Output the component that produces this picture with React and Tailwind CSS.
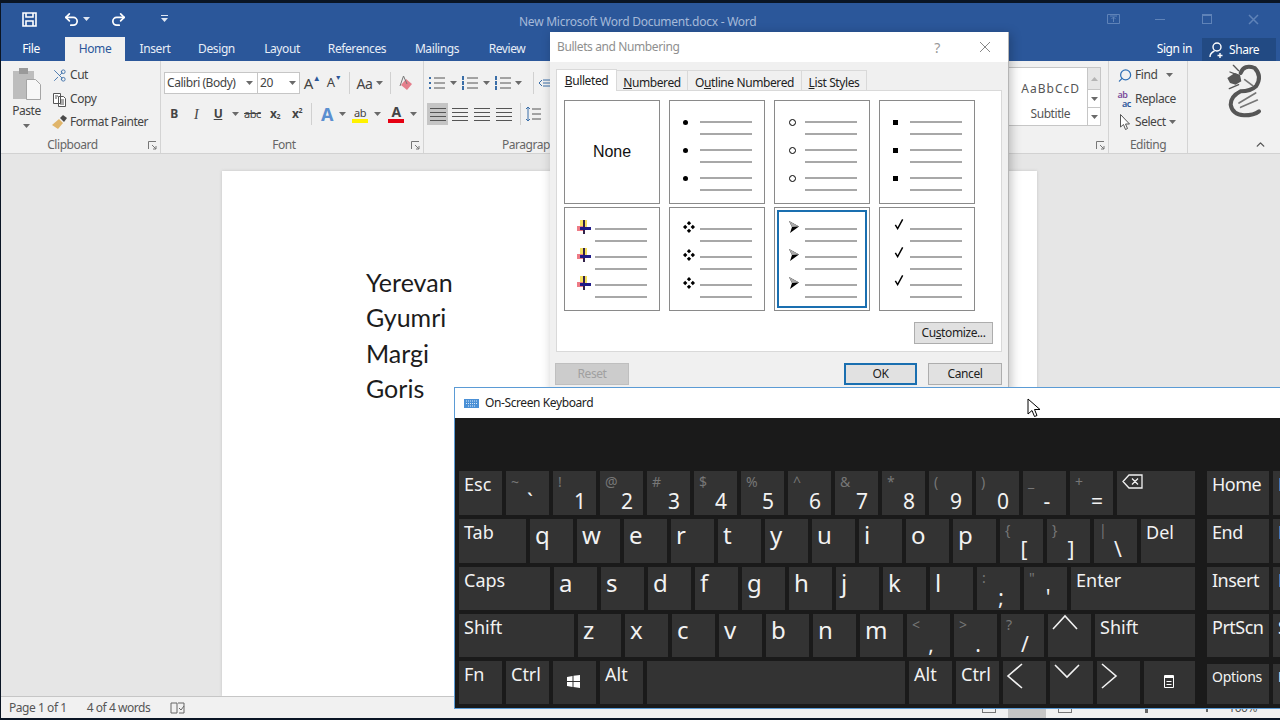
import React from 'react';
import { Scissors, Undo2, Redo2, ChevronUp, Search } from 'lucide-react';

const Caret = ({ className = '' }) => (
  <svg width="7" height="4" viewBox="0 0 7 4" className={className}>
    <path d="M0 0h7L3.5 4z" fill="#6a6a6a" />
  </svg>
);

const Launcher = () => (
  <svg width="9" height="9" viewBox="0 0 9 9" fill="none" stroke="#777" className="absolute right-[3px] top-[4px]">
    <path d="M.5 8V.5H8M4 4l4 4M5 8h3V5" />
  </svg>
);

const Sep = ({ className = '' }) => <div className={'w-px h-[22px] bg-[#d0d0d0] ' + className} />;

const Lines = ({ className = '' }) => (
  <svg width="16" height="16" viewBox="0 0 16 16" stroke="#555" className={className}>
    <path d="M0 2.5h16M0 6.5h16M0 10.5h16M0 14.5h16" />
  </svg>
);

const Btn = ({ w = 'w-[22px]', className = '', children }) => (
  <div className={'h-[22px] flex items-center justify-center shrink-0 ' + w + ' ' + className}>{children}</div>
);

function Group({ w, label, launcher = true, children }) {
  return (
    <div className={'relative h-full flex flex-col border-r border-[#d4d4d4] shrink-0 ' + w}>
      <div className="h-[76px]">{children}</div>
      <div className={'relative h-[15px] text-center text-[12px] leading-[15px] text-[#666] ' + (launcher ? 'pr-[16px]' : '')}>
        {label}
        {launcher && <Launcher />}
      </div>
    </div>
  );
}

function ClipboardGroup() {
  return (
    <Group w="w-[160px]" label="Clipboard">
      <div className="flex">
        <div className="w-[45px] ml-[3px] flex flex-col items-center pt-[6px]">
          <svg width="30" height="33" viewBox="0 0 30 33">
            <rect x="1" y="4" width="21" height="28" fill="#bdbdbd" />
            <rect x="7" y="1" width="9" height="6" fill="#9a9a9a" />
            <path d="M14.5 12.5h9l5 5v15h-14z" fill="#f7f7f7" stroke="#a5a5a5" />
          </svg>
          <div className="text-[12px] leading-[16px] text-[#444] mt-[3px]">Paste</div>
          <Caret className="mt-[5px]" />
        </div>
        <div className="flex flex-col pt-[2px] text-[12px] text-[#444]">
          <div className="h-[24px] flex items-center">
            <Scissors size={15} strokeWidth={1.4} className="w-[21px] text-[#3a6ea8] -scale-x-100" />
            <span>Cut</span>
          </div>
          <div className="h-[24px] flex items-center">
            <div className="w-[21px] flex justify-center">
              <svg width="15" height="15" viewBox="0 0 15 15" fill="#fff" stroke="#555">
                <path d="M1.5 1.5h7v10h-7zM6.5 4.5h5l2 2v8h-7z" />
                <path d="M8 8h4M8 10h4M8 12h4M3 4h3M3 6h2" fill="none" />
              </svg>
            </div>
            <span>Copy</span>
          </div>
          <div className="h-[22px] flex items-center">
            <div className="w-[21px] flex justify-center">
              <svg width="15" height="14" viewBox="0 0 15 14">
                <path d="M0 10l7-6 4 4-5 6z" fill="#e0b56a" />
                <path d="M8 3l3-3 4 3-3 4z" fill="#4a4a4a" />
              </svg>
            </div>
            <span>Format Painter</span>
          </div>
        </div>
      </div>
    </Group>
  );
}

function FontGroup() {
  return (
    <Group w="w-[263px]" label="Font">
      <div className="flex items-center pt-[11px] pl-[3px] text-[#444]">
        <div className="w-[94px] h-[22px] bg-white border border-[#c6c6c6] flex items-center justify-between pl-[2px] pr-[4px] text-[12px]">
          Calibri (Body)
          <Caret />
        </div>
        <div className="w-[43px] h-[22px] -ml-px bg-white border border-[#c6c6c6] flex items-center justify-between pl-[2px] pr-[3px] text-[12px]">
          20
          <Caret />
        </div>
        <Btn className="ml-px text-[15px]">A<span className="text-[8px] text-[#2b579a] -mt-[10px]">▲</span></Btn>
        <Btn className="text-[13px]">A<span className="text-[7px] text-[#2b579a] -mt-[10px]">▼</span></Btn>
        <Sep className="ml-[4px]" />
        <Btn w="w-[40px]" className="text-[14px] gap-[4px]">Aa<Caret /></Btn>
        <Sep />
        <Btn className="ml-[3px]">
          <svg width="15" height="16" viewBox="0 0 15 16">
            <path d="M8 4l6 5-5 6-6-5z" fill="#e57f8c" />
            <path d="M2 11L5.5 1 9 9" stroke="#777" fill="none" />
          </svg>
        </Btn>
      </div>
      <div className="flex items-center mt-[9px] pl-[2px] text-[12px] text-[#444]">
        <Btn className="font-bold">B</Btn>
        <Btn className="italic font-['Liberation_Serif',serif] text-[14px]">I</Btn>
        <Btn className="font-bold underline">U</Btn>
        <Btn w="w-[12px]"><Caret /></Btn>
        <Btn w="w-[23px]" className="line-through text-[11px]">abc</Btn>
        <Btn className="font-bold">x<span className="text-[7px] mt-[6px]">2</span></Btn>
        <Btn className="font-bold">x<span className="text-[7px] -mt-[6px]">2</span></Btn>
        <Sep className="ml-[3px] mr-[5px]" />
        <Btn w="w-[20px]"><span className="text-[18px] text-[#5b8fd0] font-bold">A</span></Btn>
        <Btn w="w-[10px]"><Caret /></Btn>
        <div className="w-[20px] ml-[3px] flex flex-col items-center text-[11px] leading-[13px]">
          ab
          <div className="w-[16px] h-[4px] bg-[#fff200]" />
        </div>
        <Btn w="w-[12px]" className="ml-px"><Caret /></Btn>
        <div className="w-[20px] ml-[3px] flex flex-col items-center text-[14px] leading-[14px] font-bold">
          A
          <div className="w-[16px] h-[4px] bg-[#e60012]" />
        </div>
        <Btn w="w-[12px]" className="ml-px"><Caret /></Btn>
      </div>
    </Group>
  );
}

const BulletIcon = ({ num }) => (
  <svg width="18" height="18" viewBox="0 0 18 18" stroke="#555" fill="#3a6ea8">
    <path d="M6 4h11M6 9h11M6 14h11" fill="none" />
    {num ? <path d="M1 2h2v4H1zM1 7h2v4H1zM1 12h2v4H1z" stroke="none" /> : <path d="M1 3h2v2H1zM1 8h2v2H1zM1 13h2v2H1z" stroke="none" />}
  </svg>
);

function ParagraphGroup() {
  return (
    <Group w="w-[228px]" label="Paragraph">
      <div className="flex items-center pt-[11px] pl-[4px]">
        <BulletIcon />
        <Caret className="mx-[4px]" />
        <BulletIcon num />
        <Caret className="mx-[4px]" />
        <BulletIcon num />
        <Caret className="mx-[3px]" />
        <Sep className="ml-[8px]" />
        <svg width="12" height="14" viewBox="0 0 12 14" stroke="#3a6ea8" className="ml-[4px]">
          <path d="M5 4H12M5 7H12M5 10H12M4 4L1 7l3 3" fill="none" />
        </svg>
      </div>
      <div className="flex items-center mt-[9px] pl-[3px]">
        <Btn w="w-[21px]" className="bg-[#c5c5c5]"><Lines /></Btn>
        <Btn w="w-[22px]" className="ml-px"><Lines /></Btn>
        <Btn><Lines /></Btn>
        <Btn><Lines /></Btn>
        <Sep className="ml-[5px]" />
        <svg width="16" height="16" viewBox="0 0 16 16" fill="none" stroke="#555" className="ml-[4px]">
          <path d="M7 3h9M7 8h9M7 13h9" />
          <path d="M3 1v14M1 3l2-2 2 2M1 13l2 2 2-2" stroke="#3a6ea8" />
        </svg>
      </div>
    </Group>
  );
}

function StylesGroup() {
  return (
    <Group w="w-[457px]" label="">
      <div className="flex justify-end pt-[6px] pr-[7px]">
        <div className="w-[120px] h-[59px] bg-white border border-[#c6c6c6] flex flex-col items-end pr-[7px] text-[#555]">
          <div className="text-[12px] tracking-[1px] mt-[13px] leading-[16px]">AaBbCcD</div>
          <div className="text-[12px] leading-[16px] mt-[9px] mr-[10px]">Subtitle</div>
        </div>
        <div className="w-[14px] h-[59px] flex flex-col -ml-px border border-[#c6c6c6] bg-white">
          <div className="h-[21px] bg-[#e6e6e6] flex items-center justify-center"><Caret className="rotate-180 opacity-40" /></div>
          <div className="h-[19px] border-y border-[#c6c6c6] flex items-center justify-center"><Caret /></div>
          <div className="flex-1 flex items-center justify-center"><Caret /></div>
        </div>
      </div>
    </Group>
  );
}

function EditingGroup() {
  return (
    <Group w="w-[79px]" label="Editing" launcher={false}>
      <div className="flex flex-col pt-[2px] pl-[6px] text-[12px] text-[#444]">
        <div className="h-[24px] flex items-center">
          <Search size={15} strokeWidth={2} className="w-[20px] text-[#2e6fb5] -scale-x-100" />
          <span>Find</span>
          <Caret className="ml-[9px]" />
        </div>
        <div className="h-[24px] flex items-center">
          <div className="w-[20px] text-[9px] leading-[9px] text-center font-semibold">
            <div className="text-[#7b4b9a] pr-[5px]">ab</div>
            <div className="text-[#2b579a] pl-[3px]">ac</div>
          </div>
          <span>Replace</span>
        </div>
        <div className="h-[22px] flex items-center">
          <div className="w-[20px] flex justify-center">
            <svg width="10" height="16" viewBox="0 0 10 16" fill="#fff" stroke="#555">
              <path d="M.5.5v12.5l3-2.5 2 5 2-1-2-4.5h4z" />
            </svg>
          </div>
          <span>Select</span>
          <Caret className="ml-[3px]" />
        </div>
      </div>
    </Group>
  );
}

function Dragon() {
  return (
    <svg width="60" height="65" viewBox="0 0 180 195" fill="none" stroke="#565656" strokeLinecap="round">
      <path d="M40 60l22-15 16 5 4 20-17 10-17-5z" fill="#565656" stroke="none" />
      <path d="M58 22l16 16M48 42l20 8M46 92l28-12" strokeWidth="4" />
      <path d="M80 45Q90 18 122 30Q146 55 126 85Q110 100 80 100Q50 115 50 140Q55 170 90 172Q120 172 135 160" strokeWidth="12" />
      <path d="M75 135l50-30M80 148l50-22M92 65l24 18" stroke="#777" strokeWidth="5" />
    </svg>
  );
}

function Ribbon() {
  return (
    <div className="relative h-[93px] bg-[#f1f1f1] border-b border-[#d2d2d2] flex shrink-0 tracking-[-0.45px]">
      <ClipboardGroup />
      <FontGroup />
      <ParagraphGroup />
      <StylesGroup />
      <EditingGroup />
      <div className="pl-[26px] -mt-[3px] h-[65px]"><Dragon /></div>
      <ChevronUp size={13} strokeWidth={2.5} className="absolute right-[13px] bottom-[2px] text-[#555]" />
    </div>
  );
}

const tabs = [
  { label: 'Insert', w: 'w-[60px]' },
  { label: 'Design', w: 'w-[63px]' },
  { label: 'Layout', w: 'w-[68px]' },
  { label: 'References', w: 'w-[82px]' },
  { label: 'Mailings', w: 'w-[78px]' },
  { label: 'Review', w: 'w-[62px]' },
];

function TitleBar() {
  return (
    <div className="h-[32px] bg-[#2b579a] flex items-center shrink-0 text-white">
      <div className="w-[518px] flex items-center shrink-0">
        <svg width="15" height="15" viewBox="0 0 15 15" fill="none" stroke="#fff" strokeWidth="1.6" className="ml-[21px]">
          <path d="M1 1h13v13H1zM4 1v4h7V1M4 14V9h7v5" />
        </svg>
        <Undo2 size={17} strokeWidth={2.4} className="ml-[26px]" />
        <svg width="7" height="4" viewBox="0 0 7 4" className="ml-[3px]"><path d="M0 0h7L3.5 4z" fill="#dfe7f3" /></svg>
        <Redo2 size={17} strokeWidth={2.4} className="ml-[20px]" />
        <svg width="7" height="8" viewBox="0 0 7 8" className="ml-[34px]" fill="#dfe7f3">
          <path d="M0 0h7v1H0zM0 3h7L3.5 7z" />
        </svg>
      </div>
      <div className="pt-[6px] text-[12px] tracking-[-0.25px] text-[#a6bad9]">New Microsoft Word Document.docx - Word</div>
      <div className="ml-auto flex items-center text-[#5f83b8]">
        <svg width="13" height="10" viewBox="0 0 13 10" fill="none" stroke="currentColor">
          <path d="M.5.5h12v9H.5zM6.5 8V3M4.5 5l2-2 2 2M3 2h7" />
        </svg>
        <div className="w-[10px] h-px bg-current ml-[35px]" />
        <div className="w-[10px] h-[10px] border border-current border-t-2 ml-[37px]" />
        <svg width="11" height="11" viewBox="0 0 11 11" stroke="currentColor" strokeWidth="1.5" className="ml-[36px] mr-[21px]">
          <path d="M1 1l9 9M10 1l-9 9" />
        </svg>
      </div>
    </div>
  );
}

function TabRow() {
  return (
    <div className="h-[26px] bg-[#2b579a] flex items-end shrink-0 text-[12px] tracking-[-0.4px] text-[#e8eef7]">
      <div className="w-[64px] h-[24px] leading-[24px] text-center pr-[4px] text-white">File</div>
      <div className="w-[60px] h-[24px] leading-[24px] text-center bg-[#f1f1f1] text-[#2b579a]">Home</div>
      {tabs.map((t) => (
        <div key={t.label} className={'h-[24px] leading-[24px] text-center ' + t.w}>{t.label}</div>
      ))}
      <div className="ml-auto h-[24px] leading-[24px] text-white mr-[10px]">Sign in</div>
      <div className="w-[74px] h-[23px] bg-[#224a83] mr-[4px] flex items-center pl-[7px] gap-[5px] text-white">
        <svg width="15" height="16" viewBox="0 0 15 16" fill="none" stroke="#fff" strokeWidth="1.4">
          <circle cx="8" cy="5" r="4" />
          <path d="M1 15c0-3 2-5 4.5-6M11 11v5M8.5 13.5h5" />
        </svg>
        Share
      </div>
    </div>
  );
}

function StatusBar() {
  return (
    <div className="h-[22px] bg-[#f1f1f1] border-t border-[#c6c6c6] flex items-center text-[12px] tracking-[-0.45px] text-[#555] shrink-0">
      <span className="ml-[8px]">Page 1 of 1</span>
      <span className="ml-[20px]">4 of 4 words</span>
      <svg width="15" height="14" viewBox="0 0 15 14" fill="none" stroke="#666" className="ml-[20px]">
        <path d="M7 2H1v10h6V2M8 2h6v10H9M9 7l2 2 3-4" />
      </svg>
      <div className="ml-auto flex items-center h-full mr-[23px]">
        <div className="w-[14px] h-[10px] border border-[#777]" />
        <div className="w-[38px] h-full bg-[#c6c6c6] ml-[12px]" />
        <div className="w-[14px] h-[10px] border border-[#777] ml-[12px]" />
        <div className="w-[3px] h-[10px] bg-[#666] ml-[73px]" />
        <div className="w-[2px] h-[8px] bg-[#666] ml-[58px]" />
        <span className="ml-[20px]">100%</span>
      </div>
    </div>
  );
}

function WordWindow() {
  return (
    <div className="absolute left-[1px] top-[3px] w-[1279px] h-[715px] flex flex-col overflow-hidden">
      <TitleBar />
      <TabRow />
      <Ribbon />
      <div className="flex-1 bg-[#e6e6e6] pt-[17px] pl-[221px] flex min-h-0">
        <div className="w-[815px] bg-white shadow-[0_0_3px_#c4c4c4] pl-[144px] pt-[94px] font-['Lato',sans-serif] text-[25px] leading-[35.3px] text-[#1c1c1c]">
          <div>Yerevan</div>
          <div>Gyumri</div>
          <div>Margi</div>
          <div>Goris</div>
        </div>
      </div>
      <StatusBar />
    </div>
  );
}

const Dot = ({ type }) => {
  if (type === 'round') return <div className="w-[5px] h-[5px] rounded-full bg-black -translate-x-[3px]" />;
  if (type === 'ring') return <div className="w-[7px] h-[7px] rounded-full border border-black bg-white -translate-x-px" />;
  if (type === 'square') return <div className="w-[5px] h-[5px] bg-black -translate-x-[3px]" />;
  if (type === 'diamond')
    return (
      <svg width="12" height="12" viewBox="0 0 11 11" fill="#000" className="-translate-y-[2px]">
        <path d="M5.5 0l2 2-2 2-2-2zM5.5 7l2 2-2 2-2-2zM2 3.5l2 2-2 2-2-2zM9 3.5l2 2-2 2-2-2z" />
      </svg>
    );
  if (type === 'arrow')
    return (
      <svg width="11" height="12" viewBox="0 0 11 12" className="-translate-y-[2px]">
        <path d="M1 0l10 5.5L2 12l2-6z" fill="#000" />
        <path d="M1 0l3 6 7-.5z" fill="#aaa" />
      </svg>
    );
  if (type === 'check')
    return (
      <svg width="10" height="11" viewBox="0 0 10 12" fill="none" stroke="#000" strokeWidth="1.6" className="-translate-y-[5px]">
        <path d="M1 6.5l2.5 4L9 .5" />
      </svg>
    );
  return (
    <svg width="14" height="14" viewBox="0 0 14 14" className="-translate-y-[2px]">
      <rect x="3" y="0" width="7" height="7" fill="#f4df60" />
      <rect x="0" y="6" width="7" height="5" fill="#ee7b86" />
      <rect x="6" y="0" width="2" height="14" fill="#33224a" />
      <rect x="3" y="7" width="11" height="3" fill="#1e1a88" />
    </svg>
  );
};

function BulletCell({ type, selected }) {
  return (
    <div className="relative h-[104px] border border-[#8a8a8a] bg-white pt-[20px] flex flex-col gap-[14px]">
      {[0, 1, 2].map((i) => (
        <div key={i} className="flex">
          <div className="w-[30px] h-[14px] -mt-[6px] pl-[7px] flex items-center justify-center shrink-0">
            <Dot type={type} />
          </div>
          <div className="w-[52px] flex flex-col gap-[10px]">
            <div className="h-[2px] bg-[#a8a8a8]" />
            <div className="h-[2px] bg-[#a8a8a8]" />
          </div>
        </div>
      ))}
      {selected && <div className="absolute inset-[2px] border-2 border-[#1a6fb0]" />}
    </div>
  );
}

const btnBase = 'h-[22px] bg-[#e1e1e1] text-[12px] text-[#222] flex items-center justify-center';
const tabOff = 'h-[20px] bg-[#f0f0f0] border border-l-0 border-b-0 border-[#d9d9d9] text-center leading-[24px] mb-px';

function BulletsDialog() {
  return (
    <div className="absolute left-[550px] top-[32px] w-[459px] h-[360px] bg-[#f0f0f0] border-r border-[#b5b5b5] shadow-[2px_2px_10px_rgba(0,0,0,0.25)] flex flex-col text-[12px] tracking-[-0.4px]">
      <div className="h-[30px] bg-white flex items-center pl-[7px] text-[#8f8f8f] shrink-0">
        Bullets and Numbering
        <span className="ml-auto text-[14px] text-[#999]">?</span>
        <svg width="12" height="12" viewBox="0 0 12 12" stroke="#888" className="ml-[39px] mr-[17px]">
          <path d="M1 1l10 10M11 1L1 11" />
        </svg>
      </div>
      <div className="flex items-end h-[29px] pl-[6px] relative z-10 text-[#222] shrink-0">
        <div className="w-[61px] h-[22px] bg-white border border-b-0 border-[#d9d9d9] text-center leading-[22px]"><span className="underline">B</span>ulleted</div>
        <div className={'w-[71px] ' + tabOff}><span className="underline">N</span>umbered</div>
        <div className={'w-[114px] ' + tabOff}>O<span className="underline">u</span>tline Numbered</div>
        <div className={'w-[65px] ' + tabOff}><span className="underline">L</span>ist Styles</div>
      </div>
      <div className="mx-[6px] h-[262px] -mt-px bg-white border border-[#d9d9d9] pt-[9px] pl-[7px] flex flex-col shrink-0">
        <div className="grid grid-cols-[96px_96px_96px_96px] gap-x-[9px] gap-y-[3px]">
          <div className="h-[104px] border border-[#8a8a8a] flex items-center justify-center font-['Liberation_Sans',sans-serif] text-[16px] tracking-normal text-[#111]">None</div>
          <BulletCell type="round" />
          <BulletCell type="ring" />
          <BulletCell type="square" />
          <BulletCell type="pic" />
          <BulletCell type="diamond" />
          <BulletCell type="arrow" selected />
          <BulletCell type="check" />
        </div>
        <div className={btnBase + ' border border-[#adadad] w-[79px] ml-[350px] mt-[11px]'}>Cu<span className="underline">s</span>tomize...</div>
      </div>
      <div className="flex mt-[11px] px-[5px]">
        <div className="w-[74px] h-[22px] border border-[#bfbfbf] bg-[#cccccc] text-[#a0a0a0] flex items-center justify-center">Reset</div>
        <div className={btnBase + ' w-[73px] ml-auto border-2 border-[#1a6fb0]'}>OK</div>
        <div className={btnBase + ' border border-[#adadad] w-[74px] ml-[11px] mr-px'}>Cancel</div>
      </div>
    </div>
  );
}

const KeyBase = ({ w = 'w-[43px]', h, children }) => (
  <div className={'relative bg-[#333333] text-[#f2f2f2] shrink-0 overflow-hidden ' + w + ' ' + h}>{children}</div>
);

const Word = ({ t, className = '' }) => <div className={'pl-[5px] pt-px text-[18px] leading-[24px] whitespace-nowrap ' + className}>{t}</div>;
const Letter = ({ t }) => <div className="pl-[5px] pt-[1px] text-[24px] leading-[30px]">{t}</div>;
const Sym = ({ s, m }) => (
  <div className="flex flex-col pt-[3px]">
    <div className="pl-[5px] text-[14px] leading-[16px] text-[#777777]">{s}</div>
    <div className={'text-center text-[21px] leading-[24px] -mt-px ' + (/[0-9=]/.test(m) ? 'pl-[11px]' : 'pl-[5px]')}>{m}</div>
  </div>
);

const Chev = ({ d, className = '' }) => (
  <svg width="26" height="32" viewBox="0 0 26 32" fill="none" stroke="#f2f2f2" strokeWidth="1.6" className={className}>
    <path d={d} />
  </svg>
);

function Row({ h, children }) {
  return <div className={'flex gap-[4px] ' + h}>{children}</div>;
}

const syms = (list, h) => list.map(([s, m]) => <KeyBase key={m} h={h}><Sym s={s} m={m} /></KeyBase>);
const letters = (list, h) => list.map((t) => <KeyBase key={t} h={h}><Letter t={t} /></KeyBase>);

function KeyboardMain() {
  const h1 = 'h-[44px]';
  const h2 = 'h-[43px]';
  return (
    <div className="w-[736px] flex flex-col gap-[4px] shrink-0">
      <Row h={h1}>
        <KeyBase h={h1}><Word t="Esc" /></KeyBase>
        {syms([['~', '`'], ['!', '1'], ['@', '2'], ['#', '3'], ['$', '4'], ['%', '5'], ['^', '6'], ['&', '7'], ['*', '8'], ['(', '9'], [')', '0'], ['_', '-'], ['+', '=']], h1)}
        <KeyBase w="w-[78px]" h={h1}>
          <svg width="21" height="16" viewBox="0 0 21 16" fill="none" stroke="#f2f2f2" strokeWidth="1.3" className="ml-[5px] mt-[3px]">
            <path d="M7 1h13v13H7L1 7.5zM10 4.5l6 6M16 4.5l-6 6" />
          </svg>
        </KeyBase>
      </Row>
      <Row h={h1}>
        <KeyBase w="w-[67px]" h={h1}><Word t="Tab" /></KeyBase>
        {letters(['q', 'w', 'e', 'r', 't', 'y', 'u', 'i', 'o', 'p'], h1)}
        {syms([['{', '['], ['}', ']'], ['|', '\\']], h1)}
        <KeyBase w="w-[54px]" h={h1}><Word t="Del" /></KeyBase>
      </Row>
      <Row h={h2}>
        <KeyBase w="w-[91px]" h={h2}><Word t="Caps" /></KeyBase>
        {letters(['a', 's', 'd', 'f', 'g', 'h', 'j', 'k', 'l'], h2)}
        {syms([[':', ';'], ['"', "'"]], h2)}
        <KeyBase w="w-[124px]" h={h2}><Word t="Enter" /></KeyBase>
      </Row>
      <Row h={h2}>
        <KeyBase w="w-[115px]" h={h2}><Word t="Shift" /></KeyBase>
        {letters(['z', 'x', 'c', 'v', 'b', 'n', 'm'], h2)}
        {syms([['<', ','], ['>', '.'], ['?', '/']], h2)}
        <KeyBase h={h2}><Chev d="M1 15L13 2l12 13" className="ml-[4px]" /></KeyBase>
        <KeyBase w="w-[100px]" h={h2}><Word t="Shift" /></KeyBase>
      </Row>
      <Row h={h2}>
        <KeyBase h={h2}><Word t="Fn" /></KeyBase>
        <KeyBase h={h2}><Word t="Ctrl" /></KeyBase>
        <KeyBase h={h2}>
          <svg width="13" height="13" viewBox="0 0 13 13" fill="#fff" className="ml-[14px] mt-[14px]">
            <path d="M0 2l5.5-1v5H0zM6.5.8L13 0v6H6.5zM0 7h5.5v5L0 11zM6.5 7H13v6l-6.5-1z" />
          </svg>
        </KeyBase>
        <KeyBase h={h2}><Word t="Alt" /></KeyBase>
        <KeyBase w="w-[258px]" h={h2} />
        <KeyBase h={h2}><Word t="Alt" /></KeyBase>
        <KeyBase h={h2}><Word t="Ctrl" /></KeyBase>
        <KeyBase h={h2}><Chev d="M19 1L5 13l14 12" className="mt-[2px]" /></KeyBase>
        <KeyBase h={h2}><Chev d="M1 1l12 12L25 1" className="ml-[4px] mt-[3px]" /></KeyBase>
        <KeyBase h={h2}><Chev d="M5 1l14 12L5 25" className="mt-[2px]" /></KeyBase>
        <KeyBase w="w-[51px]" h={h2}>
          <svg width="10" height="13" viewBox="0 0 10 13" fill="none" stroke="#fff" className="ml-[20px] mt-[14px]">
            <path d="M.5.5h9v12h-9z" />
            <path d="M0 1h10v2H0z" fill="#fff" stroke="none" />
            <path d="M2.5 6.5h5M2.5 9.5h5" />
          </svg>
        </KeyBase>
      </Row>
    </div>
  );
}

function NavColumn({ items, w }) {
  return (
    <div className="flex flex-col gap-[4px] shrink-0">
      {items.map(([t, h, small]) => (
        <KeyBase key={t} w={w} h={h}>
          {small ? <div className="pl-[5px] pt-[3px] text-[14px] tracking-[-0.3px] leading-[20px]">{t}</div> : <Word t={t} className="tracking-[-0.5px]" />}
        </KeyBase>
      ))}
    </div>
  );
}

function KeyboardWindow() {
  return (
    <div className="absolute left-[454px] top-[387px] w-[900px] h-[322px] border border-[#5b9bd5] flex flex-col">
      <div className="h-[30px] bg-white flex items-center pl-[9px] gap-[6px] text-[12px] tracking-[-0.4px] text-[#222] shrink-0">
        <svg width="15" height="9" viewBox="0 0 15 9">
          <rect width="15" height="9" fill="#4a90d6" />
          <path d="M2 2h11M2 4.5h11M4 7h7" stroke="#dbe9f7" strokeDasharray="1 1" />
        </svg>
        On-Screen Keyboard
      </div>
      <div className="flex-1 bg-[#1a1a1a] pt-[53px] pl-[4px] flex">
        <KeyboardMain />
        <div className="flex gap-[4px] ml-[12px]">
          <NavColumn
            w="w-[62px]"
            items={[
              ['Home', 'h-[44px]'],
              ['End', 'h-[44px]'],
              ['Insert', 'h-[43px]'],
              ['PrtScn', 'h-[43px]'],
              ['Options', 'h-[40px] mt-[3px]', true],
            ]}
          />
          <NavColumn
            w="w-[62px]"
            items={[
              ['PgUp', 'h-[44px]'],
              ['PgDn', 'h-[44px]'],
              ['Pause', 'h-[43px]'],
              ['ScrLk', 'h-[43px]'],
              ['Help', 'h-[40px] mt-[3px]', true],
            ]}
          />
        </div>
      </div>
    </div>
  );
}

function Cursor() {
  return (
    <svg width="14" height="20" viewBox="0 0 14 20" className="absolute left-[1027px] top-[398px]">
      <path d="M1 1v15l4-3.5 2.5 6 2.5-1-2.5-6H13z" fill="#fff" stroke="#000" />
    </svg>
  );
}

export default function App() {
  return (
    <div className="relative w-[1280px] h-[720px] overflow-hidden bg-[#0a1524] font-['Noto_Sans',sans-serif]">
      <WordWindow />
      <BulletsDialog />
      <KeyboardWindow />
      <Cursor />
    </div>
  );
}
